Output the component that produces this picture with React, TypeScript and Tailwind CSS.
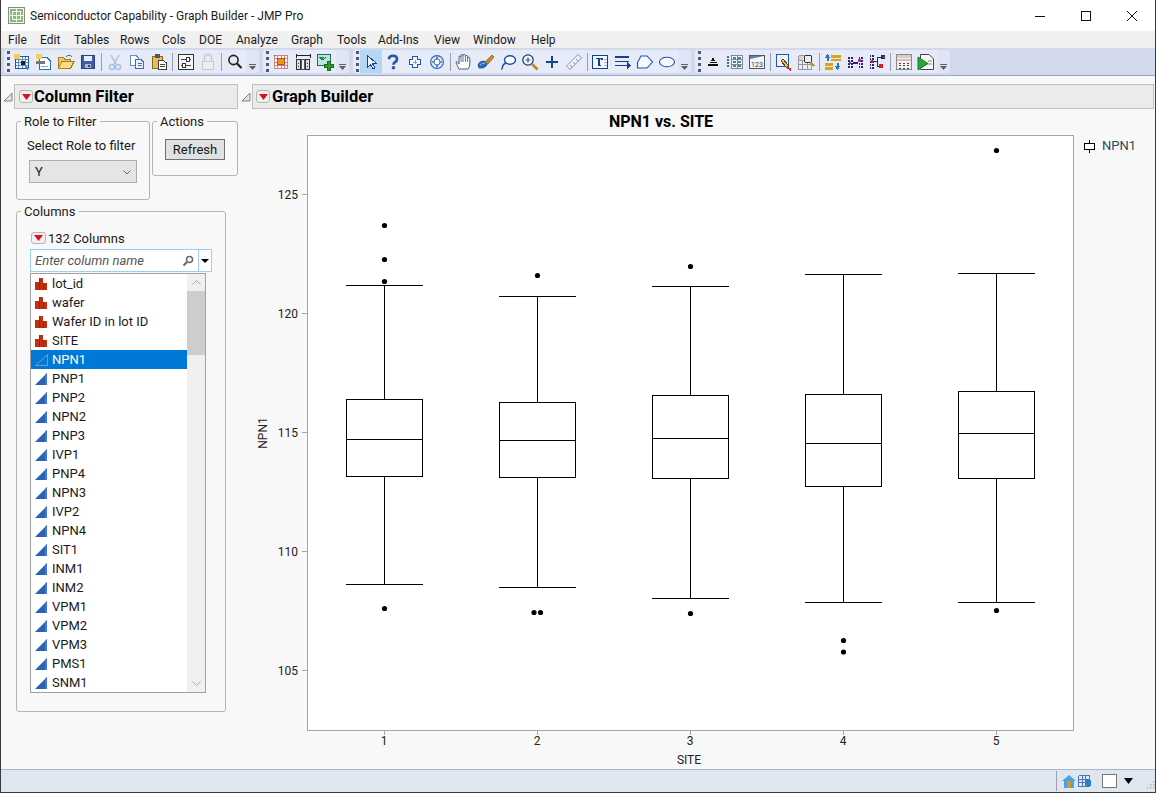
import React from "react";

const FONT = "font-['Roboto','Noto_Sans',sans-serif]";

const Sv = ({ children, s = 18 }: { children: React.ReactNode; s?: number }) => (
  <svg width={s} height={s} viewBox="0 0 18 18" fill="none" shapeRendering="crispEdges">{children}</svg>
);

const RedMenu = ({ cls }: { cls: string }) => (
  <span className={`inline-flex items-center justify-center border border-[#b5b5b5] rounded-[3px] bg-[#f0f0f0] shrink-0 ${cls}`}>
    <svg width="9" height="6" viewBox="0 0 9 6"><path d="M0 0H9L4.5 6Z" fill="#d8121c" /></svg>
  </span>
);

const Disclosure = () => (
  <svg width="10" height="10" viewBox="0 0 10 10"><path d="M9 1V9H1Z" fill="#e4e4e4" stroke="#808080" /></svg>
);

const Grip = () => (
  <div className="w-[7px] h-full flex flex-col items-center justify-center gap-[3px] pl-[1px]">
    <i className="block w-[3px] h-[3px] bg-[#50586a]" />
    <i className="block w-[3px] h-[3px] bg-[#50586a]" />
    <i className="block w-[3px] h-[3px] bg-[#50586a]" />
    <i className="block w-[3px] h-[3px] bg-[#50586a]" />
  </div>
);

const Sep = () => (
  <div className="w-[5px] h-full flex items-center justify-center">
    <i className="block w-[1px] h-[18px] bg-[#9a9fad]" />
  </div>
);

const Overflow = () => (
  <div className="w-[13px] h-full bg-[#dfe5f5] rounded-r-[3px] flex flex-col items-center justify-end pb-[3px] pr-[1px]">
    <i className="block w-[7px] h-[1px] bg-[#606060] mb-[1px]" />
    <svg width="7" height="4" viewBox="0 0 7 4"><path d="M0 0H7L3.5 4Z" fill="#606060" /></svg>
  </div>
);

const Cell = ({ children, active }: { children: React.ReactNode; active?: boolean }) => (
  <div className={`w-[22px] h-full flex items-center justify-center ${active ? "bg-[#b5d7f5]" : ""}`}>{children}</div>
);

const grid = (x: number, y: number, w: number, h: number, c: string, nx: number, ny: number) => {
  const l: React.ReactNode[] = [];
  for (let i = 0; i <= nx; i++) l.push(<path key={"v" + i} d={`M${x + (w * i) / nx} ${y}V${y + h}`} stroke={c} />);
  for (let i = 0; i <= ny; i++) l.push(<path key={"h" + i} d={`M${x} ${y + (h * i) / ny}H${x + w}`} stroke={c} />);
  return l;
};

const I = {
  newTable: <Sv><rect x="2.5" y="3.5" width="13" height="12" fill="#f4f7fc" />{grid(2.5, 3.5, 13, 12, "#5f8ccb", 4, 4)}<path d="M2.5 3.5H15.5V15.5H2.5Z" stroke="#1d56a8" /><rect x="1" y="1" width="6" height="5" fill="#f6d04a" /><rect x="8" y="8" width="4" height="4" fill="#222" /><path d="M12 11l4 5-2 1z" fill="#2b8fd8" /></Sv>,
  newScript: <Sv><path d="M4.5 4.5H12L15.5 8V16.5H4.5Z" fill="#fff" stroke="#2a6fb5" /><rect x="1" y="1" width="6" height="5" fill="#f6d04a" /><rect x="1" y="8" width="9" height="3" fill="#777" /><path d="M6 13H13" stroke="#7ba6d4" /></Sv>,
  open: <Sv><path d="M1.5 15.5V4.5H6.5L8 6.5H13.5V9" fill="#f2cc60" stroke="#a67c1d" /><path d="M1.5 15.5L4.5 8.5H17L13.5 15.5Z" fill="#f8dd86" stroke="#a67c1d" /><path d="M9 4Q13 0 15 4" stroke="#2d77c4" /></Sv>,
  save: <Sv><rect x="2.5" y="2.5" width="13" height="13" fill="#3d5ea8" stroke="#27407c" /><rect x="5" y="3" width="8" height="5" fill="#e8edf6" /><rect x="6" y="11" width="6" height="4" fill="#aeb8cf" /><rect x="9" y="12" width="2" height="2" fill="#27407c" /></Sv>,
  cut: <Sv><path d="M5 2L10 11M13 2L8 11" stroke="#b9bfca" strokeWidth="1.5" shapeRendering="auto" /><circle cx="6" cy="14" r="2.5" stroke="#a9c2e2" strokeWidth="1.5" shapeRendering="auto" /><circle cx="12" cy="14" r="2.5" stroke="#a9c2e2" strokeWidth="1.5" shapeRendering="auto" /></Sv>,
  copy: <Sv><path d="M2.5 2.5H8L10.5 5V12.5H2.5Z" fill="#fff" stroke="#6f8fbd" /><path d="M7.5 6.5H13L15.5 9V15.5H7.5Z" fill="#eaf1fb" stroke="#3d6eb0" /><path d="M9.5 10.5H13.5M9.5 12.5H13.5" stroke="#3d6eb0" /></Sv>,
  paste: <Sv><rect x="2.5" y="3.5" width="10" height="12" fill="#e7bd5a" stroke="#8b6a1c" /><rect x="5" y="1" width="5" height="4" fill="#555" /><path d="M8.5 7.5H13.5L16.5 10V16.5H8.5Z" fill="#fff" stroke="#3d3d3d" /><path d="M10 11.5H15M10 13.5H15" stroke="#444" /></Sv>,
  custom: <Sv><rect x="1.5" y="1.5" width="15" height="15" fill="#f5f5f5" stroke="#333" /><path d="M4 6H14M4 12H14" stroke="#444" /><rect x="9" y="4" width="3" height="4" fill="#fff" stroke="#333" /><rect x="5" y="10" width="3" height="4" fill="#fff" stroke="#333" /></Sv>,
  lock: <Sv><rect x="3.5" y="8.5" width="11" height="8" fill="#eeeeee" stroke="#c8c8c8" /><path d="M5.5 8.5V5Q5.5 1.5 9 1.5T12.5 5V8.5" stroke="#c8c8c8" strokeWidth="1.4" shapeRendering="auto" /></Sv>,
  search: <Sv><circle cx="7.5" cy="7" r="4.6" stroke="#222" strokeWidth="1.6" shapeRendering="auto" /><path d="M11 10.5L15.5 15" stroke="#222" strokeWidth="2.2" shapeRendering="auto" /></Sv>,
  report: <Sv><rect x="2.5" y="2.5" width="13" height="13" fill="#fff" stroke="#2257a8" />{grid(2.5, 2.5, 13, 13, "#d08080", 4, 4)}<rect x="5" y="5" width="7" height="6" fill="#e8981f" stroke="#c04a1a" /></Sv>,
  ruler2: <Sv><path d="M2 2.5H16M2 .5V4.5M16 .5V4.5" stroke="#222" /><rect x="2.5" y="6.5" width="4" height="10" fill="#d9dde2" stroke="#333" /><rect x="7.5" y="6.5" width="3" height="10" fill="#eef0f3" stroke="#555" /><rect x="11.5" y="6.5" width="4" height="10" fill="#d9dde2" stroke="#333" /><path d="M4 10H5M4 13H5M13 10H14M13 13H14" stroke="#444" /></Sv>,
  plusTable: <Sv><rect x="1.5" y="1.5" width="13" height="11" fill="#bfe5e0" stroke="#1f6a6a" /><path d="M3 4H8L6 8Z" fill="#1d7d3a" /><path d="M10 4L7 7" stroke="#1f4aa0" /><path d="M11 8H14V11H17V14H14V17H11V14H8V11H11Z" fill="#2c9a2c" stroke="#1b6e1b" /></Sv>,
  arrow: <Sv><path d="M5.5 2.5V14.5L8.5 11.5L11 16L13 15L10.5 10.5H14.5Z" fill="#eaf3fd" stroke="#14418c" /></Sv>,
  help: <svg width="16" height="16" viewBox="0 0 18 18"><path d="M4.5 6Q4.5 2 9 2T13.5 6Q13.5 8 11 9.5Q9.5 10.5 9.5 12" stroke="#1f57b0" strokeWidth="3" fill="none" /><circle cx="9.5" cy="15.5" r="2" fill="#1f57b0" /></svg>,
  cross: <Sv><path d="M6.5 3.5H11.5V6.5H14.5V11.5H11.5V14.5H6.5V11.5H3.5V6.5H6.5Z" fill="#f5f8fd" stroke="#1d56b0" /><path d="M7 9H11M9 7V11" stroke="#7aa0d6" /></Sv>,
  target: <svg width="16" height="16" viewBox="0 0 18 18"><circle cx="9" cy="9" r="7.2" fill="#dbe6f6" stroke="#2a63b5" strokeWidth="1.2" /><circle cx="9" cy="9" r="3.4" fill="#fff" stroke="#2a63b5" /><path d="M9 3V6M9 12V15M3 9H6M12 9H15" stroke="#1d4f9e" strokeWidth="1.4" /></svg>,
  hand: <svg width="18" height="18" viewBox="0 0 18 18"><path d="M4 16Q2 12 1 9.5Q1 8 2.5 9L4 11V4Q4 3 5 3T6 4V2.5Q6 1.5 7 1.5T8 2.5V2.5Q8 1.5 9.2 1.5T10.4 2.5V3.5Q10.4 2.5 11.5 2.5T12.6 3.5V5Q12.6 4.2 13.6 4.2T14.8 5.2V11Q14.8 14 13 16Z" fill="#fff" stroke="#3a4f78" strokeWidth=".9" /><path d="M6 4V9M8 2.5V9M10.4 3.5V9M12.6 5V9" stroke="#3a4f78" strokeWidth=".8" /></svg>,
  brush: <svg width="18" height="18" viewBox="0 0 18 18"><path d="M1 12Q2 8 7 8Q11 9 10 12Q7 16 2 15Z" fill="#2c6bc4" stroke="#17408c" strokeWidth=".7" /><path d="M8 9L15 2L17 4L11 11Z" fill="#c48a35" stroke="#7d5718" strokeWidth=".7" /><path d="M3 12Q5 10 8 10" stroke="#9cc4f0" /></svg>,
  lasso: <svg width="18" height="18" viewBox="0 0 18 18"><ellipse cx="11" cy="7" rx="5.5" ry="4.2" fill="#fff" stroke="#1d4f9e" strokeWidth="1.4" /><path d="M7 10Q4 11 3.5 14L2.5 16.5" stroke="#1d4f9e" strokeWidth="1.4" fill="none" /></svg>,
  zoom: <svg width="18" height="18" viewBox="0 0 18 18"><circle cx="7" cy="7" r="5.2" fill="#f3f7fc" stroke="#1f2f55" strokeWidth="1.2" /><path d="M4.5 7H9.5M7 4.5V9.5" stroke="#2857a8" strokeWidth="1.2" /><path d="M11 11L16.5 16.5" stroke="#b88a2a" strokeWidth="2.6" /></svg>,
  plus: <Sv><path d="M9 3V15M3 9H15" stroke="#11468f" strokeWidth="2" /></Sv>,
  ruler: <svg width="18" height="18" viewBox="0 0 18 18"><path d="M1.5 13L13 1.5L16.5 5L5 16.5Z" fill="#eef2f8" stroke="#8a93a6" /><path d="M5 12L7 14M8 9L10 11M11 6L13 8" stroke="#8a93a6" /></svg>,
  text: <Sv><rect x="0.5" y="2.5" width="15" height="13" fill="#f3f6fc" stroke="#14418c" /><path d="M4 5.5H10V7M7 5.5V12.5M5.5 12.5H8.5" stroke="#14418c" strokeWidth="1.6" /><path d="M12 6H15M12 9H15M12 12H15" stroke="#9fb4d6" /></Sv>,
  lines: <Sv><rect x="1" y="3" width="14" height="2" fill="#14418c" /><rect x="1" y="8" width="14" height="1" fill="#14418c" /><rect x="1" y="12" width="14" height="1" fill="#14418c" /><path d="M13 9L17 12.5L13 16Z" fill="#14418c" /></Sv>,
  poly: <svg width="18" height="18" viewBox="0 0 18 18"><path d="M1.5 9.5L5 3H11L16.5 9L11 15H1.5Z" fill="#f5f8fd" stroke="#1d56b0" strokeWidth="1.1" /></svg>,
  ellipse: <svg width="18" height="18" viewBox="0 0 18 18"><ellipse cx="9" cy="9" rx="7.5" ry="4.8" fill="#f5f8fd" stroke="#1d56b0" strokeWidth="1.1" /></svg>,
  tri: <Sv><path d="M9 4L11 8H7Z" fill="#111" /><path d="M5.5 9.5H12.5M4 12H14" stroke="#111" strokeWidth="1.5" /></Sv>,
  tableCols: <Sv><rect x="5.5" y="2.5" width="11" height="13" fill="#f7f7f7" stroke="#777" />{grid(5.5, 2.5, 11, 13, "#888", 2, 3)}<path d="M7 5H10M7 9H10M7 13H10M12 5H15M12 9H15M12 13H15" stroke="#3f7fc4" strokeWidth="1.4" /><path d="M1 4H3M1 7H3M1 10H3M1 13H3" stroke="#3c6ea8" strokeWidth="1.6" /></Sv>,
  num: <svg width="18" height="18" viewBox="0 0 18 18"><rect x="1.5" y="2.5" width="15" height="13" fill="#f5f5f5" stroke="#555" /><path d="M2 6V3H16Z" fill="#5f7eb5" /><text x="9" y="13.5" fontSize="7" textAnchor="middle" fill="#333" fontFamily="Roboto">123</text></svg>,
  edit: <Sv><rect x="1.5" y="1.5" width="12" height="12" fill="#eef3fb" stroke="#1f57b0" strokeWidth="1" /><path d="M6 8L11 14L14 16L13 12L8 6Z" fill="#f1c549" stroke="#5a4312" /><path d="M12 14L16 17" stroke="#d91f26" strokeWidth="2" /></Sv>,
  tableSearch: <Sv>{grid(1.5, 2.5, 13, 14, "#999", 3, 3)}<rect x="2" y="3" width="4" height="4" fill="#e8c9c9" /><circle cx="11" cy="6" r="4" fill="#e6f0fa" stroke="#333" /><path d="M13.5 9L17 13" stroke="#c48a1f" strokeWidth="2" /></Sv>,
  sort: <Sv><path d="M3.5 1L6.5 5H4.5V8H2.5V5H.5Z" fill="#2278d0" /><path d="M13.5 17L10.5 13H12.5V10H14.5V13H16.5Z" fill="#2278d0" /><rect x="7" y="1.5" width="10" height="3" fill="#d9a21f" /><rect x="7" y="6" width="10" height="2" fill="#d9a21f" /><rect x="1" y="10" width="8" height="2.5" fill="#d9a21f" /><rect x="1" y="14" width="8" height="2.5" fill="#d9a21f" /></Sv>,
  join: <Sv><rect x="1" y="3" width="6" height="12" fill="#1e2b6d" />{grid(1, 3, 6, 12, "#e9e9ff", 2, 4)}<rect x="3" y="9" width="2" height="2" fill="#d91f6a" /><rect x="12" y="3" width="5" height="12" fill="#1e2b6d" />{grid(12, 3, 5, 12, "#e9e9ff", 2, 4)}<rect x="12" y="6" width="3" height="3" fill="#c02fa8" /><path d="M7 10H12" stroke="#1e2b6d" strokeWidth="2" /></Sv>,
  tree: <Sv><rect x="1" y="1" width="5" height="15" fill="#1e2b6d" />{grid(1, 1, 5, 15, "#e9e9ff", 2, 5)}<rect x="3" y="7" width="2" height="3" fill="#d91f26" /><path d="M6 8H9M9 4V13M9 4H13M9 13H11" stroke="#1e2b6d" /><rect x="13" y="2" width="4" height="4" fill="#1e2b6d" /><rect x="15" y="3" width="2" height="2" fill="#d91f26" /><rect x="11" y="11" width="4" height="4" fill="#d91f26" /></Sv>,
  calc: <Sv><rect x="1.5" y="1.5" width="15" height="15" fill="#f1f1f1" stroke="#8a8a8a" /><rect x="2" y="2" width="14" height="3" fill="#cfcfcf" /><rect x="2" y="6" width="14" height="2" fill="#e9b7b7" /><path d="M4 10H6M8 10H10M12 10H14M4 12.5H6M8 12.5H10M12 12.5H14M4 15H6M8 15H10M12 15H14" stroke="#444" /></Sv>,
  run: <svg width="18" height="18" viewBox="0 0 18 18"><path d="M3.5 1.5H12L16.5 6V16.5H3.5Z" fill="#fafafa" stroke="#444" /><path d="M11 8H15M11 11H15" stroke="#888" /><path d="M1 4V17L11 10.5Z" fill="#27a83a" stroke="#157a25" /></svg>,
};

const menus = [
  ["File", "w-[32px]"], ["Edit", "w-[34px]"], ["Tables", "w-[46px]"], ["Rows", "w-[42px]"], ["Cols", "w-[37px]"], ["DOE", "w-[37px]"],
  ["Analyze", "w-[55px]"], ["Graph", "w-[46px]"], ["Tools", "w-[41px]"], ["Add-Ins", "w-[56px]"], ["View", "w-[39px]"], ["Window", "w-[58px]"], ["Help", "w-[40px]"],
];

const cols: [string, boolean][] = [
  ["lot_id", false], ["wafer", false], ["Wafer ID in lot ID", false], ["SITE", false], ["NPN1", true], ["PNP1", true], ["PNP2", true], ["NPN2", true],
  ["PNP3", true], ["IVP1", true], ["PNP4", true], ["NPN3", true], ["IVP2", true], ["NPN4", true], ["SIT1", true], ["INM1", true], ["INM2", true],
  ["VPM1", true], ["VPM2", true], ["VPM3", true], ["PMS1", true], ["SNM1", true],
];

const NomIcon = () => (
  <svg width="13" height="12" viewBox="0 0 13 12" shapeRendering="crispEdges">
    <rect x="0" y="4" width="4" height="8" fill="#c0300f" /><rect x="4" y="0" width="1" height="12" fill="#8f2a14" /><rect x="5" y="0" width="3" height="12" fill="#c0300f" /><rect x="8" y="5" width="1" height="7" fill="#8f2a14" /><rect x="9" y="5" width="3" height="7" fill="#c0300f" />
  </svg>
);
const ContIcon = ({ sel }: { sel?: boolean }) => (
  <svg width="13" height="12" viewBox="0 0 13 12">
    {sel ? <path d="M.5 11.5L12.5 .5V11.5Z" fill="none" stroke="#7f9cc0" /> : <><path d="M0 12L12 0V12Z" fill="#2b62b8" /><path d="M12 0V12H10V2Z" fill="#3f7ad0" /></>}
  </svg>
);

const boxes = [
  { x: 384, top: 285, q3: 399, med: 439, q1: 476, bot: 584, out: [[384, 225], [384, 259], [384, 281], [384, 608]] },
  { x: 537, top: 296, q3: 402, med: 440, q1: 477, bot: 587, out: [[537, 275], [533.5, 612], [540, 612]] },
  { x: 690, top: 286, q3: 395, med: 438, q1: 478, bot: 598, out: [[690, 266], [690, 613]] },
  { x: 843, top: 274, q3: 394, med: 443, q1: 486, bot: 602, out: [[843, 640], [843, 651.5]] },
  { x: 996, top: 273, q3: 391, med: 433, q1: 478, bot: 602, out: [[996, 150], [996, 610]] },
];

const OX = 252, OY = 130;

const Chart = () => (
  <svg width="828" height="638" viewBox={`${OX} ${OY} 828 638`} className="block shrink-0" fontFamily="Roboto, sans-serif" fontSize="12" fill="#222">
    <rect x="307.5" y="135.5" width="766" height="595" fill="#fff" stroke="#a6a6a6" />
    {[[125, 194], [120, 313], [115, 432], [110, 551], [105, 670]].map(([t, y]) => (
      <g key={t}>
        <path d={`M302 ${y + 0.5}H307`} stroke="#a6a6a6" />
        <text x="298" y={y + 4.5} textAnchor="end">{t}</text>
      </g>
    ))}
    {boxes.map((b, i) => (
      <g key={i}>
        <path d={`M${b.x + 0.5} ${b.top}V${b.q3}M${b.x + 0.5} ${b.q1}V${b.bot}M${b.x - 38} ${b.top + 0.5}H${b.x + 39}M${b.x - 38} ${b.bot + 0.5}H${b.x + 39}M${b.x - 38} ${b.med + 0.5}H${b.x + 39}`} stroke="#000" shapeRendering="crispEdges" />
        <rect x={b.x - 37.5} y={b.q3 + 0.5} width="76" height={b.q1 - b.q3} fill="none" stroke="#000" shapeRendering="crispEdges" />
        {b.out.map(([x, y], j) => <circle key={j} cx={x + 0.5} cy={y + 0.5} r="2.6" fill="#000" />)}
        <path d={`M${b.x + 0.5} 731V735`} stroke="#a6a6a6" />
        <text x={b.x} y="745" textAnchor="middle">{i + 1}</text>
      </g>
    ))}
    <text x="689" y="764" textAnchor="middle">SITE</text>
    <text transform="rotate(-90 267 433)" x="267" y="433" textAnchor="middle">NPN1</text>
  </svg>
);

export default function App() {
  return (
    <div className={`w-[1156px] h-[793px] flex flex-col border-x border-b border-[#3a3a3a] bg-[#f8f8f8] overflow-hidden text-[12px] text-[#1a1a1a] ${FONT}`}>
      {/* Title bar */}
      <div className="h-[31px] bg-white flex items-center shrink-0">
        <svg className="ml-[7px]" width="17" height="17" viewBox="0 0 17 17" shapeRendering="crispEdges">
          <rect x=".5" y=".5" width="16" height="16" fill="#f4f4f4" stroke="#8a8a8a" />
          <path d="M2 2H8V4H4V8H2ZM9 2H15V8H13V4H9ZM2 9H4V13H8V15H2ZM13 9H15V15H9V13H13Z" fill="#8fb96a" />
          <rect x="5" y="5" width="3" height="3" fill="#8fb96a" /><rect x="9" y="5" width="3" height="3" fill="#8fb96a" /><rect x="5" y="9" width="3" height="3" fill="#8fb96a" /><rect x="9" y="9" width="3" height="3" fill="#8fb96a" />
        </svg>
        <span className="ml-[5px]">Semiconductor Capability - Graph Builder - JMP Pro</span>
        <div className="ml-auto flex items-center">
          <div className="w-[46px] flex justify-center"><svg width="10" height="10" viewBox="0 0 10 10" shapeRendering="crispEdges"><path d="M0 5.5H10" stroke="#111" /></svg></div>
          <div className="w-[46px] flex justify-center"><svg width="10" height="10" viewBox="0 0 10 10" shapeRendering="crispEdges"><rect x=".5" y=".5" width="9" height="9" fill="none" stroke="#111" /></svg></div>
          <div className="w-[46px] flex justify-center"><svg width="10" height="10" viewBox="0 0 10 10"><path d="M0 0L10 10M10 0L0 10" stroke="#111" /></svg></div>
        </div>
      </div>
      {/* Menu */}
      <div className="h-[17px] bg-[#f0f0f0] flex items-center pl-[7px] shrink-0">
        {menus.map(([m, w]) => <span key={m} className={w}>{m}</span>)}
      </div>
      {/* Toolbar */}
      <div className="h-[28px] bg-[#d3d9ec] border-b border-[#9aa5c8] flex items-center gap-[4px] pl-[3px] shrink-0">
        <div className="h-[23px] flex bg-[#e6ebf7] rounded-[3px]">
          <Grip /><Cell>{I.newTable}</Cell><Cell>{I.newScript}</Cell><Cell>{I.open}</Cell><Cell>{I.save}</Cell><Sep />
          <Cell>{I.cut}</Cell><Cell>{I.copy}</Cell><Cell>{I.paste}</Cell><Sep /><Cell>{I.custom}</Cell><Cell>{I.lock}</Cell><Sep /><Cell>{I.search}</Cell><Overflow />
        </div>
        <div className="h-[23px] flex bg-[#e6ebf7] rounded-[3px]">
          <Grip /><Cell>{I.report}</Cell><Cell>{I.ruler2}</Cell><Cell>{I.plusTable}</Cell><Overflow />
        </div>
        <div className="h-[23px] flex bg-[#e6ebf7] rounded-[3px]">
          <Grip /><Cell active>{I.arrow}</Cell><Cell>{I.help}</Cell><Cell>{I.cross}</Cell><Cell>{I.target}</Cell><Sep />
          <Cell>{I.hand}</Cell><Cell>{I.brush}</Cell><Cell>{I.lasso}</Cell><Cell>{I.zoom}</Cell><Cell>{I.plus}</Cell><Cell>{I.ruler}</Cell><Sep />
          <Cell>{I.text}</Cell><Cell>{I.lines}</Cell><Cell>{I.poly}</Cell><Cell>{I.ellipse}</Cell><Overflow />
        </div>
        <div className="h-[23px] flex bg-[#e6ebf7] rounded-[3px]">
          <Grip /><Cell>{I.tri}</Cell><Cell>{I.tableCols}</Cell><Cell>{I.num}</Cell><Sep /><Cell>{I.edit}</Cell><Cell>{I.tableSearch}</Cell><Sep />
          <Cell>{I.sort}</Cell><Cell>{I.join}</Cell><Cell>{I.tree}</Cell><Sep /><Cell>{I.calc}</Cell><Cell>{I.run}</Cell><Overflow />
        </div>
      </div>
      {/* Content */}
      <div className="flex-1 flex min-h-0 pt-[8px]">
        {/* Left panel */}
        <div className="w-[239px] shrink-0 flex flex-col pl-[2px] text-[13px]">
          <div className="flex items-center h-[25px]">
            <Disclosure />
            <div className="ml-[1px] w-[224px] h-full bg-[#ebebeb] border border-[#c0c0c0] flex items-center pl-[4px]">
              <RedMenu cls="w-[14px] h-[13px]" />
              <span className="ml-[1px] pt-[1px] text-[16.5px] font-bold text-black">Column Filter</span>
            </div>
          </div>
          <div className="flex gap-[2px] pl-[13px] mt-[4px] items-start">
            <fieldset className="w-[134px] h-[87px] border border-[#b4b4b4] rounded-[3px] pl-[10px]">
              <legend className="ml-[-6px] px-[3px] h-[16px] leading-[18px]">Role to Filter</legend>
              <div className="mt-[8px] h-[17px] leading-[17px]">Select Role to filter</div>
              <div className="mt-[6px] ml-[2px] w-[108px] h-[23px] border border-[#adadad] bg-[#e5e5e5] flex items-center justify-between px-[5px] pt-[1px]">
                <span>Y</span>
                <svg width="8" height="5" viewBox="0 0 8 5"><path d="M.5 .5L4 4L7.5 .5" fill="none" stroke="#666" /></svg>
              </div>
            </fieldset>
            <fieldset className="w-[86px] h-[63px] border border-[#b4b4b4] rounded-[3px] pl-[12px]">
              <legend className="ml-[-8px] px-[3px] h-[16px] leading-[18px]">Actions</legend>
              <button className="mt-[10px] w-[60px] h-[21px] border border-[#707070] bg-[#e1e1e1] text-center leading-[19px]">Refresh</button>
            </fieldset>
          </div>
          <fieldset className="ml-[13px] mt-[3px] w-[210px] h-[509px] border border-[#b4b4b4] rounded-[3px] pl-[13px]">
            <legend className="ml-[-9px] px-[3px] h-[16px] leading-[18px]">Columns</legend>
            <div className="flex items-center h-[14px] mt-[12px] ml-[1px]">
              <RedMenu cls="w-[15px] h-[12px]" />
              <span className="ml-[2px] pt-[1px]">132 Columns</span>
            </div>
            <div className="mt-[4px] w-[182px] h-[23px] border border-[#99d1f0] bg-white flex items-center">
              <span className="flex-1 pl-[4px] pt-[1px] italic text-[#555]">Enter column name</span>
              <svg className="mr-[4px]" width="12" height="12" viewBox="0 0 12 12"><circle cx="7.5" cy="4.5" r="3" fill="none" stroke="#666" strokeWidth="1.5" /><path d="M5 7L1.5 10.5" stroke="#666" strokeWidth="2" /></svg>
              <div className="w-[13px] h-full border-l border-[#99d1f0] flex items-center justify-center">
                <svg width="8" height="4" viewBox="0 0 8 4"><path d="M0 0H8L4 4Z" fill="#000" /></svg>
              </div>
            </div>
            <div className="mt-[1px] w-[176px] h-[420px] border border-[#a0a0a0] bg-white flex">
              <div className="w-[156px] shrink-0 flex flex-col">
                {cols.map(([c, cont], i) => (
                  <div key={c} className={`h-[19px] shrink-0 flex items-center pl-[4px] ${i === 4 ? "bg-[#0078d7] text-white" : ""}`}>
                    <span className="w-[17px] shrink-0 flex">{cont ? <ContIcon sel={i === 4} /> : <NomIcon />}</span>
                    <span className="whitespace-nowrap">{c}</span>
                  </div>
                ))}
              </div>
              <div className="flex-1 bg-[#f0f0f0] flex flex-col items-center">
                <div className="h-[17px] w-full flex items-center justify-center">
                  <svg width="9" height="5" viewBox="0 0 9 5"><path d="M.5 4.5L4.5 .5L8.5 4.5" fill="none" stroke="#a6a6a6" /></svg>
                </div>
                <div className="h-[64px] w-full bg-[#cdcdcd]" />
                <div className="flex-1" />
                <div className="h-[17px] w-full flex items-center justify-center">
                  <svg width="9" height="5" viewBox="0 0 9 5"><path d="M.5 .5L4.5 4.5L8.5 .5" fill="none" stroke="#a6a6a6" /></svg>
                </div>
              </div>
            </div>
          </fieldset>
        </div>
        {/* Right panel */}
        <div className="flex-1 min-w-0 flex flex-col pl-[1px]">
          <div className="flex items-center h-[25px]">
            <Disclosure />
            <div className="ml-[1px] w-[902px] h-full bg-[#ebebeb] border border-[#c0c0c0] flex items-center pl-[3px]">
              <RedMenu cls="w-[14px] h-[13px]" />
              <span className="ml-[2px] pt-[1px] text-[16.5px] font-bold text-black">Graph Builder</span>
            </div>
          </div>
          <div className="flex-1 flex flex-col">
            <div className="h-[21px] w-[818px] pt-[4px] ml-[11px] flex items-center justify-center text-[16px] font-bold text-black">NPN1 vs. SITE</div>
            <div className="flex ml-[11px]">
              <Chart />
              <div className="ml-[3px] mt-[8px] h-[16px] flex items-center">
                <svg width="13" height="13" viewBox="0 0 13 13" shapeRendering="crispEdges"><path d="M6.5 0V3M6.5 10V13" stroke="#000" /><rect x="1.5" y="3.5" width="10" height="6" fill="#fff" stroke="#000" /></svg>
                <span className="ml-[6px] text-[13px] text-[#2a4a5a]">NPN1</span>
              </div>
            </div>
          </div>
        </div>
      </div>
      {/* Status bar */}
      <div className="h-[23px] shrink-0 bg-[#e0e6f0] border-t border-[#a9b4cf] flex items-center justify-end relative">
        <div className="w-[1px] h-[20px] bg-[#9aa0ad]" />
        <div className="w-[98px] flex items-center pl-[5px]">
          <svg width="14" height="13" viewBox="0 0 14 13"><path d="M7 0L14 6H12V13H2V6H0Z" fill="#4aa3dc" /><rect x="5" y="6" width="4" height="7" fill="#c89a3a" /></svg>
          <svg className="ml-[2px]" width="14" height="13" viewBox="0 0 14 13" shapeRendering="crispEdges">{grid(.5, .5, 11, 11, "#4a78b8", 3, 3)}<rect x="7" y="5" width="6" height="6" fill="#2a7fcc" /></svg>
          <div className="ml-[10px] w-[15px] h-[14px] bg-white border border-[#777]" />
          <svg className="ml-[7px]" width="9" height="6" viewBox="0 0 9 6"><path d="M0 0H9L4.5 6Z" fill="#000" /></svg>
          <svg className="ml-[12px] mt-[10px]" width="10" height="10" viewBox="0 0 10 10"><g fill="#b4b9c4"><rect x="8" y="0" width="1.5" height="1.5" /><rect x="5" y="3" width="1.5" height="1.5" /><rect x="8" y="3" width="1.5" height="1.5" /><rect x="2" y="6" width="1.5" height="1.5" /><rect x="5" y="6" width="1.5" height="1.5" /><rect x="8" y="6" width="1.5" height="1.5" /></g></svg>
        </div>
      </div>
    </div>
  );
}
